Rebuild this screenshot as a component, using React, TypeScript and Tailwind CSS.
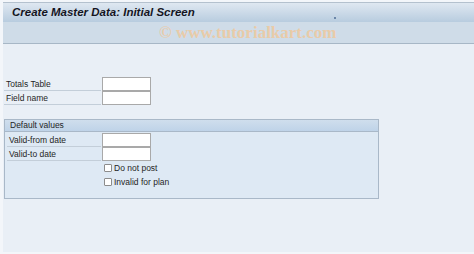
import React from 'react';

const font = { fontFamily: '"Liberation Sans", Arial, sans-serif' };

function FieldRow({ label, inGroup }: { label: string; inGroup?: boolean }) {
  return (
    <div className="flex items-start h-[14px]">
      <div className={`h-[14px] border-b border-[#c3ced9] text-[8.5px] leading-[14px] text-[#1f1f1f] ${inGroup ? 'w-[94px] pl-[2px]' : 'w-[97px] pl-[2px]'}`}>
        {label}
      </div>
      <div className="ml-[1px] w-[49px] h-[14px] bg-white border border-[#a9a9a9]" />
    </div>
  );
}

function CheckRow({ label }: { label: string }) {
  return (
    <div className="flex items-center h-[14px] pl-[97px]">
      <div className="w-[8px] h-[8px] bg-white border border-[#8c8c8c] rounded-[1px]" />
      <span className="ml-[2px] text-[8.5px] leading-[13px] text-[#1f1f1f]">{label}</span>
    </div>
  );
}

export default function App() {
  return (
    <div className="w-[474px] h-[254px] bg-[#f3f6fa] pt-[2px] pl-[3px] overflow-hidden" style={font}>
      <div className="border-t border-[#b4c1ce] h-[250px] flex flex-col">
        <div className="h-[19px] bg-gradient-to-b from-[#dfe8f1] to-[#b8ccdf] flex items-center pl-[9px] relative">
          <span className="text-[11.5px] font-bold italic text-[#15151f] leading-none">
            Create Master Data: Initial Screen
          </span>
          <span className="absolute left-[331px] top-[14px] w-[2px] h-[2px] bg-[#6b86a8]" />
        </div>
        <div className="h-[22px] bg-[#cfdce8] border-b border-[#a7b7c6] flex items-center pl-[156px]">
          <span
            className="text-[17px] text-[#e9cba8] leading-none font-bold"
            style={{ fontFamily: '"Liberation Serif", "Times New Roman", serif' }}
          >
            © www.tutorialkart.com
          </span>
        </div>
        <div className="flex-1 bg-[#e9eff6] pt-[33px] pl-[1px]">
          <FieldRow label="Totals Table" />
          <FieldRow label="Field name" />
          <div className="mt-[14px] w-[375px] h-[80px] border border-[#a9b8c8] bg-[#dee9f4]">
            <div className="h-[12px] bg-gradient-to-b from-[#cfdeed] to-[#bfd3e8] border-b border-[#a9b8c8] pl-[5px] text-[8.5px] leading-[11px] text-[#1f1f1f]">
              Default values
            </div>
            <div className="pt-[1px] pl-[2px]">
              <FieldRow label="Valid-from date" inGroup />
              <FieldRow label="Valid-to date" inGroup />
              <CheckRow label="Do not post" />
              <CheckRow label="Invalid for plan" />
            </div>
          </div>
        </div>
      </div>
    </div>
  );
}
